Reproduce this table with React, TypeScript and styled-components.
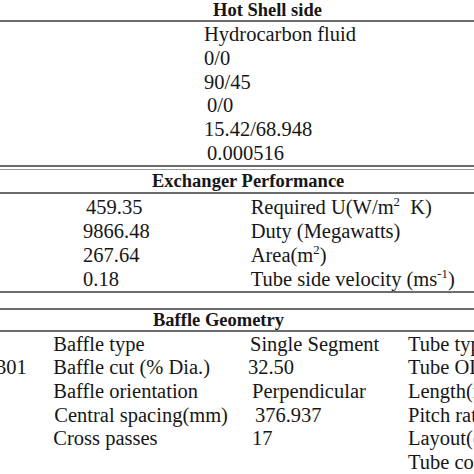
import React from "react"
import styled, { createGlobalStyle } from "styled-components"

const GlobalStyle = createGlobalStyle`
    html, body {
        margin: 0;
        padding: 0;
        background: #ffffff;
    }
`

const Page = styled.div`
    width: 474px;
    height: 474px;
    overflow: hidden;
    display: flex;
    flex-direction: column;
    background: #ffffff;
    color: #161616;
    font-family: "Liberation Serif", "Times New Roman", serif;
    font-size: 20.5px;
`

const Rule = styled.div<{ $weight?: number; $tone?: string; $gap?: number }>`
    flex-shrink: 0;
    height: ${(p) => p.$weight ?? 2}px;
    margin-top: ${(p) => p.$gap ?? 0}px;
    background: ${(p) => p.$tone ?? "#6c6c6c"};
`

const Heading = styled.div<{ $indent: number; $height: number }>`
    flex-shrink: 0;
    height: ${(p) => p.$height}px;
    line-height: ${(p) => p.$height + 1}px;
    padding-left: ${(p) => p.$indent}px;
    font-size: 18.5px;
    font-weight: bold;
    white-space: nowrap;
`

const Table = styled.div<{ $offset?: number }>`
    flex-shrink: 0;
    display: flex;
    flex-direction: column;
    margin-left: ${(p) => -(p.$offset ?? 0)}px;
`

const Row = styled.div<{ $cols: string; $height: number }>`
    display: grid;
    grid-template-columns: ${(p) => p.$cols};
    height: ${(p) => p.$height}px;
    line-height: ${(p) => p.$height + 2}px;
`

const Cell = styled.div<{ $nudge?: number }>`
    padding-left: ${(p) => p.$nudge ?? 0}px;
    white-space: nowrap;
`

const Sup = styled.sup`
    font-size: 0.62em;
    line-height: 0;
    vertical-align: 0.6em;
`

type Entry = { text: React.ReactNode; nudge?: number }

const shellRows: Entry[] = [
    { text: "Hydrocarbon fluid" },
    { text: "0/0" },
    { text: "90/45" },
    { text: "0/0", nudge: 3 },
    { text: "15.42/68.948" },
    { text: "0.000516", nudge: 3 },
]

const performanceRows: Entry[][] = [
    [{ text: "459.35", nudge: 3 }, { text: <>Required U(W/m<Sup>2</Sup>&nbsp; K)</> }],
    [{ text: "9866.48" }, { text: "Duty (Megawatts)" }],
    [{ text: "267.64" }, { text: <>Area(m<Sup>2</Sup>)</> }],
    [{ text: "0.18" }, { text: <>Tube side velocity (ms<Sup>-1</Sup>)</> }],
]

const baffleRows: Entry[][] = [
    [{ text: "" }, { text: "Baffle type" }, { text: "Single Segment", nudge: 2 }, { text: "Tube type" }],
    [{ text: "301" }, { text: "Baffle cut (% Dia.)" }, { text: "32.50" }, { text: "Tube OD(mm)" }],
    [{ text: "" }, { text: "Baffle orientation" }, { text: "Perpendicular", nudge: 4 }, { text: "Length(m)" }],
    [{ text: "" }, { text: "Central spacing(mm)", nudge: 1 }, { text: "376.937", nudge: 7 }, { text: "Pitch ratio" }],
    [{ text: "" }, { text: "Cross passes" }, { text: "17", nudge: 4 }, { text: "Layout(deg)" }],
    [{ text: "" }, { text: "" }, { text: "" }, { text: "Tube count" }],
]

function App() {
    return (
        <>
            <GlobalStyle />
            <Page>
                <Heading $indent={213} $height={20}>Hot Shell side</Heading>
                <Rule />
                <Table>
                    {shellRows.map((row, i) => (
                        <Row key={i} $cols="204px 1fr" $height={23.8}>
                            <Cell />
                            <Cell $nudge={row.nudge}>{row.text}</Cell>
                        </Row>
                    ))}
                </Table>
                <Rule />
                <Rule $weight={1} $tone="#9a9a9a" $gap={2} />
                <Heading $indent={152} $height={22}>Exchanger Performance</Heading>
                <Rule />
                <Table>
                    {performanceRows.map((row, i) => (
                        <Row key={i} $cols="83px 167.7px 1fr" $height={24}>
                            <Cell />
                            {row.map((c, j) => (
                                <Cell key={j} $nudge={c.nudge}>{c.text}</Cell>
                            ))}
                        </Row>
                    ))}
                </Table>
                <Rule $gap={1} />
                <Rule $gap={15} />
                <Heading $indent={153} $height={20}>Baffle Geometry</Heading>
                <Rule />
                <Table $offset={4}>
                    {baffleRows.map((row, i) => (
                        <Row key={i} $cols="57.3px 194.7px 160px 1fr" $height={23.6}>
                            {row.map((c, j) => (
                                <Cell key={j} $nudge={c.nudge}>{c.text}</Cell>
                            ))}
                        </Row>
                    ))}
                </Table>
            </Page>
        </>
    )
}

export default App
